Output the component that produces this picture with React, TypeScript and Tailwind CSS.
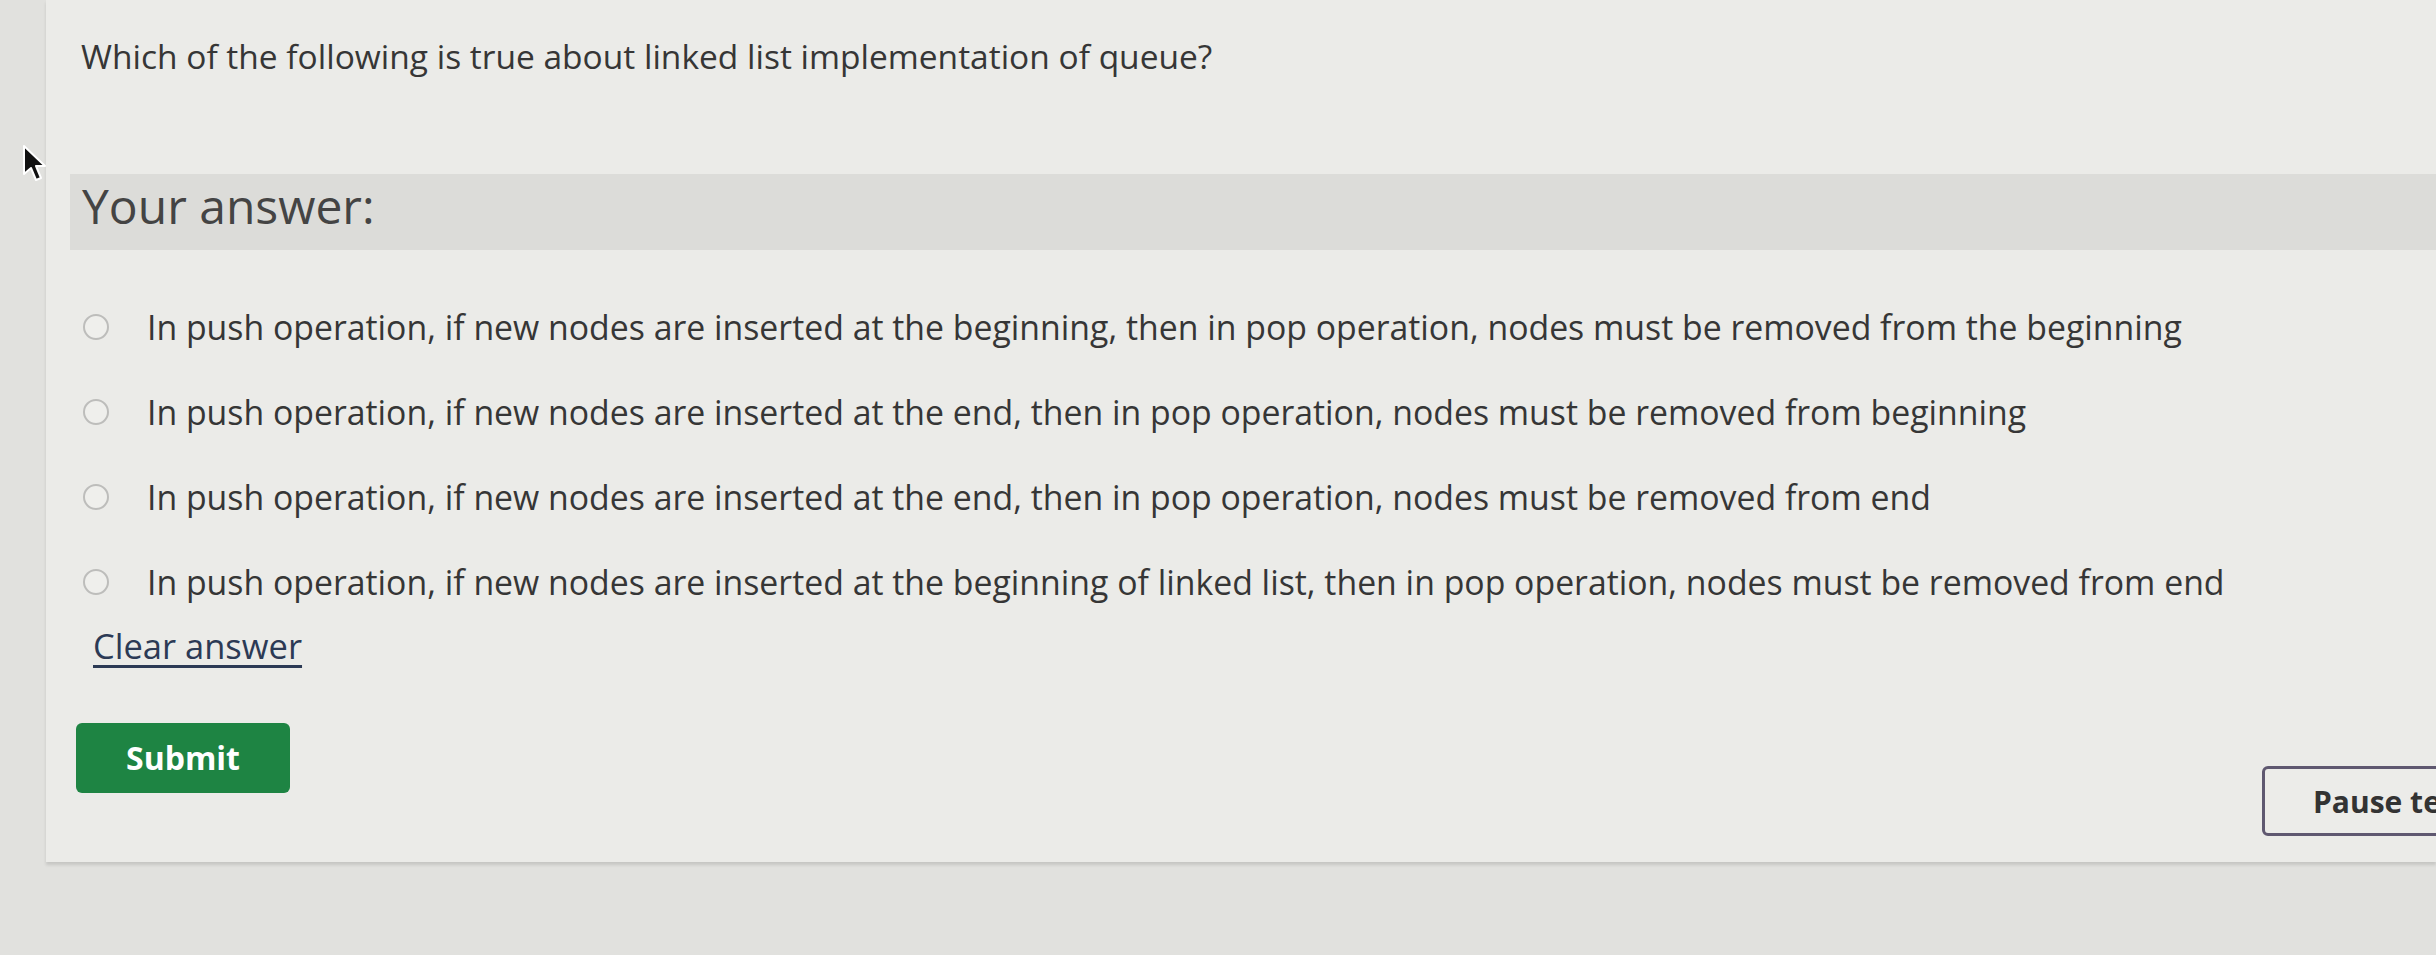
import React from "react";

const options = [
  "In push operation, if new nodes are inserted at the beginning, then in pop operation, nodes must be removed from the beginning",
  "In push operation, if new nodes are inserted at the end, then in pop operation, nodes must be removed from beginning",
  "In push operation, if new nodes are inserted at the end, then in pop operation, nodes must be removed from end",
  "In push operation, if new nodes are inserted at the beginning of linked list, then in pop operation, nodes must be removed from end",
];

export default function App() {
  return (
    <div
      className="relative w-full h-[955px] overflow-hidden bg-[#e1e1de] text-[#363636]"
      style={{ fontFamily: '"Open Sans", "Noto Sans", sans-serif' }}
    >
      <div className="ml-[46px] h-[862px] bg-[#ebebe8] shadow-[0_3px_3px_rgba(0,0,0,0.12)] flex flex-col">
        <div className="pl-[35px] pt-[31px] text-[33.5px] leading-[50px]">
          Which of the following is true about linked list implementation of queue?
        </div>
        <div className="ml-[24px] mt-[93px] h-[76px] bg-[#dcdcd9] pl-[12px] pb-[12px] flex items-center text-[48px] text-[#444444]">
          Your answer:
        </div>
        <div className="mt-[52px] flex flex-col gap-[35px] pl-[37px]">
          {options.map((o) => (
            <label key={o} className="flex items-center gap-[38px] text-[33.8px] leading-[50px]">
              <span className="w-[26px] h-[26px] rounded-full border-2 border-[#bdbdbb] bg-[#efefec] shrink-0" />
              <span className="whitespace-nowrap">{o}</span>
            </label>
          ))}
        </div>
        <div className="pl-[47px] mt-[14px] text-[34.5px] leading-[50px]">
          <span className="underline underline-offset-[6px] text-[#2c3a55]">Clear answer</span>
        </div>
        <div className="relative flex-1">
          <button className="absolute left-[30px] top-[52px] w-[214px] h-[70px] rounded-[6px] bg-[#1e8443] text-white font-bold text-[32px]">
            Submit
          </button>
          <button className="absolute left-[2216px] top-[95px] w-[240px] h-[70px] rounded-[6px] border-[3px] border-[#5f5870] bg-[#ecece9] text-[#333333] font-bold text-[30px] text-left pl-[48px] whitespace-nowrap">
            Pause test
          </button>
        </div>
      </div>
      <svg className="absolute left-[22px] top-[144px]" width="26" height="40" viewBox="0 0 26 40">
        <path d="M2 2 L2 30 L9 24 L14 36 L19 34 L14 22 L23 22 Z" fill="#111" stroke="#fff" strokeWidth="2" strokeLinejoin="round" />
      </svg>
    </div>
  );
}
